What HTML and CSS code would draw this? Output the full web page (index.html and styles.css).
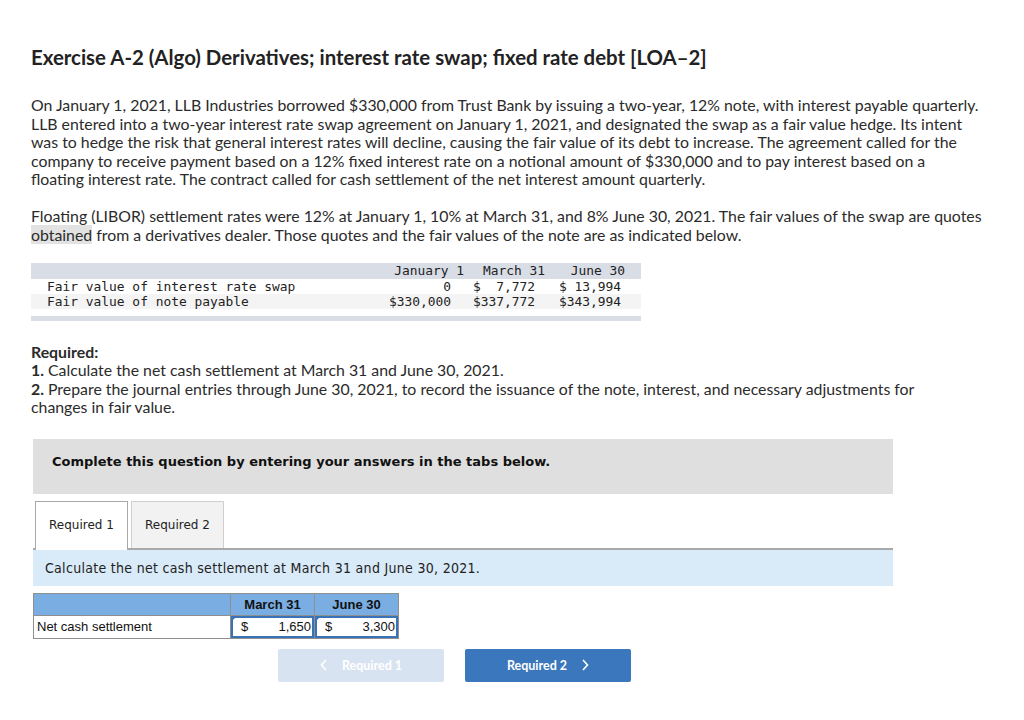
FILE: index.html
```html
<!DOCTYPE html>
<html>
<head>
<meta charset="utf-8">
<title>Exercise A-2</title>
<link rel="stylesheet" href="styles.css">
</head>
<body>
<div class="page">
  <h1 class="title">Exercise A-2 (Algo) Derivatives; interest rate swap; fixed rate debt [LOA–2]</h1>
  <p class="para">On January 1, 2021, LLB Industries borrowed $330,000 from Trust Bank by issuing a two-year, 12% note, with interest payable quarterly. LLB entered into a two-year interest rate swap agreement on January 1, 2021, and designated the swap as a fair value hedge. Its intent was to hedge the risk that general interest rates will decline, causing the fair value of its debt to increase. The agreement called for the company to receive payment based on a 12% fixed interest rate on a notional amount of $330,000 and to pay interest based on a floating interest rate. The contract called for cash settlement of the net interest amount quarterly.</p>
  <p class="para para2">Floating (LIBOR) settlement rates were 12% at January 1, 10% at March 31, and 8% June 30, 2021. The fair values of the swap are quotes <span class="hl">obtained</span> from a derivatives dealer. Those quotes and the fair values of the note are as indicated below.</p>

  <div class="fv">
    <div class="fv-row fv-head">
      <span class="fv-label"></span>
      <span class="c1">January 1</span>
      <span class="c2">March 31</span>
      <span class="c3">June 30</span>
    </div>
    <div class="fv-row">
      <span class="fv-label">Fair value of interest rate swap</span>
      <span class="c1">0</span>
      <span class="c2">$  7,772</span>
      <span class="c3">$ 13,994</span>
    </div>
    <div class="fv-row fv-alt">
      <span class="fv-label">Fair value of note payable</span>
      <span class="c1">$330,000</span>
      <span class="c2">$337,772</span>
      <span class="c3">$343,994</span>
    </div>
    <div class="fv-foot"></div>
  </div>

  <div class="required">
    <div class="req-title">Required:</div>
    <div><b>1.</b> Calculate the net cash settlement at March 31 and June 30, 2021.</div>
    <div><b>2.</b> Prepare the journal entries through June 30, 2021, to record the issuance of the note, interest, and necessary adjustments for changes in fair value.</div>
  </div>

  <div class="question">
    <div class="prompt">Complete this question by entering your answers in the tabs below.</div>
    <div class="tabs">
      <div class="tab active">Required 1</div>
      <div class="tab">Required 2</div>
    </div>
    <div class="instr">Calculate the net cash settlement at March 31 and June 30, 2021.</div>
    <table class="answer">
      <tr class="ans-head">
        <th class="ans-label"></th>
        <th>March 31</th>
        <th>June 30</th>
      </tr>
      <tr>
        <td class="ans-label">Net cash settlement</td>
        <td class="ans-cell"><div class="input"><span class="flag"></span><span>$</span><span>1,650</span></div></td>
        <td class="ans-cell"><div class="input"><span class="flag"></span><span>$</span><span>3,300</span></div></td>
      </tr>
    </table>
    <div class="nav">
      <button class="btn prev"><svg class="chev" width="8" height="12" viewBox="0 0 8 12"><polyline points="6,1 1.5,6 6,11" fill="none" stroke="currentColor" stroke-width="1.6"/></svg><span>Required 1</span></button>
      <button class="btn next"><span>Required 2</span><svg class="chev" width="8" height="12" viewBox="0 0 8 12"><polyline points="2,1 6.5,6 2,11" fill="none" stroke="currentColor" stroke-width="1.6"/></svg></button>
    </div>
  </div>
</div>
</body>
</html>
```
FILE: styles.css
```css
html, body {
  margin: 0;
  padding: 0;
  background: #ffffff;
}

body {
  font-family: "Lato", "Open Sans", sans-serif;
  color: #2b2b2b;
}

.page {
  padding: 45px 0 0 31px;
  width: 951px;
}

.title {
  margin: 0;
  font-size: 20.4px;
  line-height: 24px;
  font-weight: 700;
  color: #222;
}

.para {
  margin: 27px 0 0 0;
  font-size: 15.85px;
  line-height: 18.5px;
}

.para2 {
  margin-top: 18.5px;
}

.hl {
  background: #e2e2e2;
}

/* fair value table */
.fv {
  margin-top: 19px;
  width: 610px;
  font-family: "DejaVu Sans Mono", monospace;
  font-size: 12.9px;
  color: #222;
}

.fv-row {
  display: grid;
  grid-template-columns: 349px 85px 83px 93px;
  height: 15px;
  line-height: 15px;
  white-space: pre;
}

.fv-head {
  background: #d9dde6;
  height: 16px;
  line-height: 16px;
}

.fv-alt {
  background: #f4f4f4;
}

.fv-label {
  padding-left: 16px;
}

.fv-row .c1, .fv-row .c2, .fv-row .c3 {
  text-align: right;
}

.fv-row .c1 { padding-right: 14px; }
.fv-row .c2 { padding-right: 13px; }
.fv-row .c3 { padding-right: 20px; }

.fv-head .c1 { padding-right: 1px; }
.fv-head .c2 { padding-right: 3px; }
.fv-head .c3 { padding-right: 16px; }

.fv-foot {
  margin-top: 7px;
  height: 5px;
  background: #d9dde6;
}

/* required */
.required {
  margin-top: 21.5px;
  font-size: 15.85px;
  line-height: 18.5px;
  width: 915px;
}

.req-title {
  font-weight: 700;
}

/* question area */
.question {
  margin-top: 22px;
  margin-left: 2px;
  width: 860px;
}

.prompt {
  background: #dfdfdf;
  height: 55px;
  box-sizing: border-box;
  padding: 14px 0 0 19px;
  font-family: "DejaVu Sans", Verdana, sans-serif;
  font-weight: 700;
  font-size: 13px;
  line-height: 18px;
  color: #111;
}

.tabs {
  margin-top: 7px;
  display: flex;
  gap: 3px;
  padding-left: 2px;
  border-bottom: 2px solid #a9a9a9;
}

.tab {
  width: 93px;
  height: 47px;
  box-sizing: border-box;
  border: 1px solid #cfcfcf;
  border-bottom: none;
  background: #f2f2f2;
  font-family: "DejaVu Sans", Verdana, sans-serif;
  font-size: 12px;
  line-height: 47px;
  text-align: center;
  color: #222;
}

.tab.active {
  background: #ffffff;
  border-color: #a9a9a9;
  height: 49px;
  margin-bottom: -2px;
}

.instr {
  background: #d9eaf8;
  height: 36px;
  box-sizing: border-box;
  padding: 10px 0 0 12px;
  font-family: "DejaVu Sans Condensed", "DejaVu Sans", sans-serif;
  font-size: 14px;
  letter-spacing: 0.3px;
  line-height: 16px;
  color: #222;
}

.answer {
  margin-top: 7px;
  border-collapse: collapse;
  font-family: "Liberation Sans", Arial, sans-serif;
  font-size: 13px;
  color: #111;
}

.answer th, .answer td {
  border: 1px solid #8f8f8f;
  padding: 0;
}

.ans-head th {
  background: #7aaee2;
  height: 21px;
  font-weight: 700;
  text-align: center;
  width: 83px;
}

.ans-head th.ans-label {
  width: 196px;
}

.answer td {
  height: 22px;
}

.answer td.ans-label {
  padding-left: 3px;
  text-align: left;
}

.ans-cell {
  padding: 0;
}

.input {
  position: relative;
  display: flex;
  justify-content: space-between;
  align-items: center;
  height: 22px;
  box-sizing: border-box;
  border: 2px solid #3a72b8;
  padding: 0 1px 0 8px;
  background: #fff;
}

.flag {
  position: absolute;
  left: -2px;
  top: -2px;
  width: 0;
  height: 0;
  border-top: 6px solid #3a72b8;
  border-right: 6px solid transparent;
}

.nav {
  margin-top: 10px;
  margin-left: 245px;
  display: flex;
  gap: 21px;
}

.btn {
  width: 166px;
  height: 33px;
  border: none;
  border-radius: 2px;
  font-family: "Lato", "Open Sans", sans-serif;
  font-weight: 700;
  font-size: 12.5px;
  color: #ffffff;
  display: flex;
  align-items: center;
  justify-content: center;
  gap: 14px;
  padding: 0;
}

.btn.prev {
  background: #d8e3f1;
}

.btn.next {
  background: #3a77bc;
}

.chev {
  display: block;
}
```
